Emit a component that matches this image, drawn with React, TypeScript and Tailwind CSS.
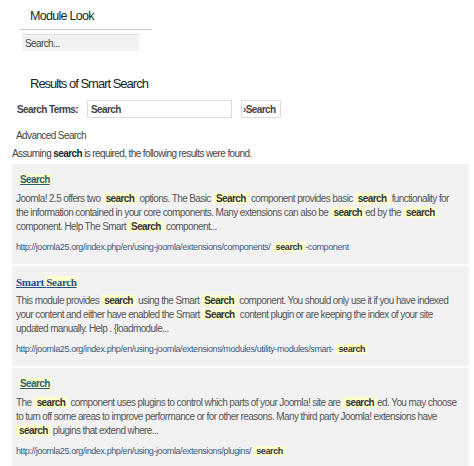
import React from 'react';

const Hl: React.FC<{ children: React.ReactNode }> = ({ children }) => (
  <span className="bg-[#ffffcc] px-[3px] font-bold text-[#333]">{children}</span>
);

interface ResultProps {
  title: React.ReactNode;
  body: React.ReactNode;
  url: React.ReactNode;
}

const Result: React.FC<ResultProps> = ({ title, body, url }) => (
  <div className="h-[100px] bg-[#f2f2f2] pl-1 pr-3 pt-[10px]">
    <div className="h-[12px] text-[10px] leading-[12px] font-bold tracking-[-0.6px]">{title}</div>
    <p className="mt-[6px] text-[10px] leading-[14px] tracking-[-0.6px] text-[#555]">{body}</p>
    <p className="mt-[7px] text-[9px] leading-[12px] tracking-[-0.4px] text-[#3a5a85]">{url}</p>
  </div>
);

const App: React.FC = () => {
  return (
    <div className="w-[474px] h-[466px] overflow-hidden bg-white font-['Liberation_Sans',Arial,sans-serif] text-[#333]">
      {/* Module */}
      <div className="pl-5 pt-[9px]">
        <div className="w-[132px] border-b border-[#cfcfcf] pb-[5px] pl-[10px] text-[12.5px] leading-[15px] tracking-[-0.7px] text-[#222]">
          Module Look
        </div>
        <div className="mt-[4px] ml-[2px] flex h-[17px] w-[117px] items-center border-t border-[#e0e0e0] bg-[#f2f2f2] pl-[3px] text-[10px] tracking-[-0.6px] text-[#444]">
          Search...
        </div>
      </div>

      {/* Smart search header */}
      <div className="mt-[25px] pl-[30px] text-[13px] leading-[16px] tracking-[-1px] text-[#222]">
        Results of Smart Search
      </div>

      <div className="mt-[8px] flex items-center pl-[17px]">
        <span className="w-[70px] whitespace-nowrap text-[10px] font-bold tracking-[-0.6px] text-[#444]">Search Terms:</span>
        <div className="flex h-[18px] w-[145px] items-center border border-[#dcdcdc] pl-[3px] text-[10px] font-bold tracking-[-0.6px] text-[#444]">
          Search
        </div>
        <div className="ml-[9px] flex h-[18px] w-[40px] items-center border border-[#dcdcdc] pl-[1px] text-[10px] font-bold whitespace-nowrap tracking-[-0.6px] text-[#444]">
          ›Search
        </div>
      </div>

      <div className="mt-[11px] pl-4 text-[10px] leading-[13px] tracking-[-0.6px] text-[#444]">Advanced Search</div>
      <div className="mt-[5px] pl-3 text-[10px] leading-[13px] tracking-[-0.6px] text-[#444]">
        Assuming <span className="font-bold text-[#222]">search</span> is required, the following results were found.
      </div>

      {/* Results */}
      <div className="mt-[4px] mr-[5px] ml-3 flex flex-col gap-[2px]">
        <Result
          title={
            <span className="ml-[3px] bg-[#ffffcc] px-[1px] text-[#2d5c78] underline">Search</span>
          }
          body={
            <>
              Joomla! 2.5 offers two <Hl>search</Hl> options. The Basic <Hl>Search</Hl> component provides basic{' '}
              <Hl>search</Hl> functionality for the information contained in your core components. Many extensions can
              also be <Hl>search</Hl>ed by the <Hl>search</Hl> component. Help The Smart <Hl>Search</Hl> component...
            </>
          }
          url={
            <>
              http://joomla25.org/index.php/en/using-joomla/extensions/components/ <Hl>search</Hl>-component
            </>
          }
        />
        <Result
          title={
            <span className="font-['Liberation_Serif',serif] text-[11px] tracking-[-0.3px] text-[#2a4f8a] underline">
              Smart <span className="bg-[#ffffcc]">Search</span>
            </span>
          }
          body={
            <>
              This module provides <Hl>search</Hl> using the Smart <Hl>Search</Hl> component. You should only use it if
              you have indexed your content and either have enabled the Smart <Hl>Search</Hl> content plugin or are
              keeping the index of your site updated manually. Help . {'{'}loadmodule...
            </>
          }
          url={
            <>
              http://joomla25.org/index.php/en/using-joomla/extensions/modules/utility-modules/smart- <Hl>search</Hl>
            </>
          }
        />
        <Result
          title={
            <span className="ml-[3px] bg-[#ffffcc] px-[1px] text-[#2d5c78] underline">Search</span>
          }
          body={
            <>
              The <Hl>search</Hl> component uses plugins to control which parts of your Joomla! site are{' '}
              <Hl>search</Hl>ed. You may choose to turn off some areas to improve performance or for other reasons.
              Many third party Joomla! extensions have <Hl>search</Hl> plugins that extend where...
            </>
          }
          url={
            <>
              http://joomla25.org/index.php/en/using-joomla/extensions/plugins/ <Hl>search</Hl>
            </>
          }
        />
      </div>
    </div>
  );
};

export default App;
